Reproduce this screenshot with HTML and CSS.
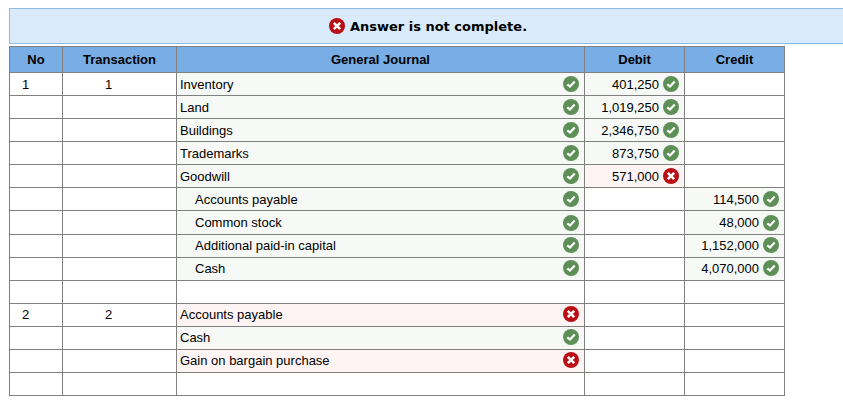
FILE: index.html
```html
<!DOCTYPE html>
<html lang="en">
<head>
<meta charset="utf-8">
<title>Answer is not complete</title>
<link rel="stylesheet" href="styles.css">
</head>
<body>
<svg class="defs" width="0" height="0" aria-hidden="true">
  <symbol id="ok" viewBox="0 0 16 16">
    <circle cx="8" cy="8" r="8" fill="#5d8f57"/>
    <path d="M4.3 8.3 7 10.6 11.7 5.6" fill="none" stroke="#fff" stroke-width="2.2"/>
  </symbol>
  <symbol id="bad" viewBox="0 0 16 16">
    <circle cx="8" cy="8" r="8" fill="#b90f14"/>
    <path d="M4.8 4.8 11.2 11.2M11.2 4.8 4.8 11.2" fill="none" stroke="#fff" stroke-width="2.6"/>
  </symbol>
</svg>
<div class="banner">
  <svg class="icon"><use href="#bad"/></svg>
  <span>Answer is not complete.</span>
</div>
<table class="journal">
  <thead>
    <tr><th class="c-no">No</th><th class="c-tr">Transaction</th><th class="c-gj">General Journal</th><th class="c-amt">Debit</th><th class="c-amt">Credit</th></tr>
  </thead>
  <tbody>
    <tr><td class="ctr-no">1</td><td class="ctr">1</td><td class="good"><div class="cell"><span>Inventory</span><svg class="icon"><use href="#ok"/></svg></div></td><td class="good"><div class="cell num"><span>401,250</span><svg class="icon"><use href="#ok"/></svg></div></td><td></td></tr>
    <tr><td></td><td></td><td class="good"><div class="cell"><span>Land</span><svg class="icon"><use href="#ok"/></svg></div></td><td class="good"><div class="cell num"><span>1,019,250</span><svg class="icon"><use href="#ok"/></svg></div></td><td></td></tr>
    <tr><td></td><td></td><td class="good"><div class="cell"><span>Buildings</span><svg class="icon"><use href="#ok"/></svg></div></td><td class="good"><div class="cell num"><span>2,346,750</span><svg class="icon"><use href="#ok"/></svg></div></td><td></td></tr>
    <tr><td></td><td></td><td class="good"><div class="cell"><span>Trademarks</span><svg class="icon"><use href="#ok"/></svg></div></td><td class="good"><div class="cell num"><span>873,750</span><svg class="icon"><use href="#ok"/></svg></div></td><td></td></tr>
    <tr><td></td><td></td><td class="good"><div class="cell"><span>Goodwill</span><svg class="icon"><use href="#ok"/></svg></div></td><td class="wrong"><div class="cell num"><span>571,000</span><svg class="icon"><use href="#bad"/></svg></div></td><td></td></tr>
    <tr><td></td><td></td><td class="good"><div class="cell ind"><span>Accounts payable</span><svg class="icon"><use href="#ok"/></svg></div></td><td></td><td class="good"><div class="cell num"><span>114,500</span><svg class="icon"><use href="#ok"/></svg></div></td></tr>
    <tr class="tall"><td></td><td></td><td class="good"><div class="cell ind"><span>Common stock</span><svg class="icon"><use href="#ok"/></svg></div></td><td></td><td class="good"><div class="cell num"><span>48,000</span><svg class="icon"><use href="#ok"/></svg></div></td></tr>
    <tr class="lift"><td></td><td></td><td class="good"><div class="cell ind"><span>Additional paid-in capital</span><svg class="icon"><use href="#ok"/></svg></div></td><td></td><td class="good"><div class="cell num"><span>1,152,000</span><svg class="icon"><use href="#ok"/></svg></div></td></tr>
    <tr class="lift"><td></td><td></td><td class="good"><div class="cell ind"><span>Cash</span><svg class="icon"><use href="#ok"/></svg></div></td><td></td><td class="good"><div class="cell num"><span>4,070,000</span><svg class="icon"><use href="#ok"/></svg></div></td></tr>
    <tr><td></td><td></td><td></td><td></td><td></td></tr>
    <tr class="lift"><td class="ctr-no">2</td><td class="ctr">2</td><td class="wrong"><div class="cell"><span>Accounts payable</span><svg class="icon"><use href="#bad"/></svg></div></td><td></td><td></td></tr>
    <tr class="lift"><td></td><td></td><td class="good"><div class="cell"><span>Cash</span><svg class="icon"><use href="#ok"/></svg></div></td><td></td><td></td></tr>
    <tr class="lift"><td></td><td></td><td class="wrong"><div class="cell"><span>Gain on bargain purchase</span><svg class="icon"><use href="#bad"/></svg></div></td><td></td><td></td></tr>
    <tr><td></td><td></td><td></td><td></td><td></td></tr>
  </tbody>
</table>
</body>
</html>
```
FILE: styles.css
```css
html, body {
  overflow: hidden;
}
body {
  margin: 8px 0 0 9px;
  background: #fff;
  color: #000;
  font-family: "Liberation Sans", Arial, sans-serif;
  font-size: 13px;
}
.defs {
  position: absolute;
}
.icon {
  display: block;
  flex: none;
  width: 16px;
  height: 16px;
}
.banner {
  display: flex;
  align-items: center;
  justify-content: center;
  gap: 5px;
  box-sizing: border-box;
  height: 36px;
  width: 842px;
  padding-right: 4px;
  margin-bottom: 2px;
  background: #d9ebfb;
  border: 1px solid #8fbbe3;
  font-family: "DejaVu Sans", Verdana, sans-serif;
  font-size: 13px;
  font-weight: 700;
}
.journal {
  border-collapse: collapse;
  table-layout: fixed;
  width: 776px;
}
.journal th, .journal td {
  border: 1px solid #808080;
  padding: 0;
  height: 22px;
}
.journal tr.tall td {
  height: 23px;
}
.journal tr.lift td {
  height: 20px;
  padding-bottom: 2px;
}
.journal th {
  height: 25px;
  background: #79ade5;
  font-size: 13px;
  font-weight: 700;
  text-align: center;
}
.c-no { width: 52px; }
.c-tr { width: 113px; }
.c-gj { width: 407px; }
.c-amt { width: 99px; }
.ctr { text-align: center; }
.journal td.ctr { padding-right: 22px; }
.ctr-no { text-align: left; text-indent: 12px; }
.good { background: #f6f9f6; }
.wrong { background: #fff4f4; }
.cell {
  display: flex;
  align-items: center;
  justify-content: space-between;
  padding: 0 5px 0 3px;
}
.cell.ind {
  padding-left: 18px;
}
.cell.num {
  justify-content: flex-end;
  gap: 4px;
}
```
